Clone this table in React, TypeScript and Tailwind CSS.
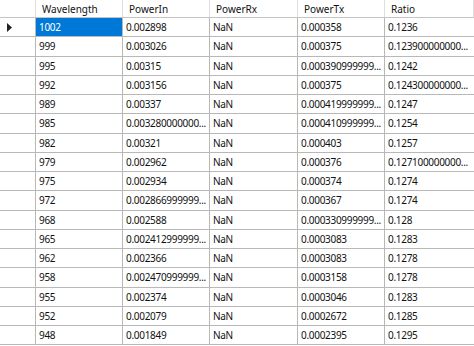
import React from 'react';

// Filas de la grilla (tal como se muestran, ya truncadas)
const filas: string[][] = [
  ['1002', '0.002898', 'NaN', '0.000358', '0.1236'],
  ['999', '0.003026', 'NaN', '0.000375', '0.123900000000...'],
  ['995', '0.00315', 'NaN', '0.000390999999...', '0.1242'],
  ['992', '0.003156', 'NaN', '0.000375', '0.124300000000...'],
  ['989', '0.00337', 'NaN', '0.000419999999...', '0.1247'],
  ['985', '0.003280000000...', 'NaN', '0.000410999999...', '0.1254'],
  ['982', '0.00321', 'NaN', '0.000403', '0.1257'],
  ['979', '0.002962', 'NaN', '0.000376', '0.127100000000...'],
  ['975', '0.002934', 'NaN', '0.000374', '0.1274'],
  ['972', '0.002866999999...', 'NaN', '0.000367', '0.1274'],
  ['968', '0.002588', 'NaN', '0.000330999999...', '0.128'],
  ['965', '0.002412999999...', 'NaN', '0.0003083', '0.1283'],
  ['962', '0.002366', 'NaN', '0.0003083', '0.1278'],
  ['958', '0.002470999999...', 'NaN', '0.0003158', '0.1278'],
  ['955', '0.002374', 'NaN', '0.0003046', '0.1283'],
  ['952', '0.002079', 'NaN', '0.0002672', '0.1285'],
  ['948', '0.001849', 'NaN', '0.0002395', '0.1295'],
];

const columnas = ['Wavelength', 'PowerIn', 'PowerRx', 'PowerTx', 'Ratio'];

const cols = 'grid grid-cols-[36px_87px_87px_88px_87px_1fr]';

const App = () => {
  return (
    <div
      className="w-[474px] h-[346px] overflow-hidden bg-white text-[10px] tracking-[-0.3px] text-[#111]"
      style={{ fontFamily: '"Noto Sans", "Open Sans", sans-serif' }}
    >
      {/* Encabezado */}
      <div className={`${cols} h-[18px] border-b border-[#c4c4c4]`}>
        <div className="border-r border-[#dedede]" />
        {columnas.map((c) => (
          <div key={c} className="flex items-center pl-[6px] border-r border-[#dedede] leading-none tracking-normal">
            {c}
          </div>
        ))}
      </div>

      {/* Filas */}
      {filas.map((fila, i) => (
        <div key={i} className={`${cols} h-[19.25px] border-b border-[#b8b8b8]`}>
          <div className="flex items-center pl-[7px] border-r border-[#b8b8b8]">
            {i === 0 && (
              <svg width="5" height="9" viewBox="0 0 5 9">
                <path d="M0 0 L5 4.5 L0 9 Z" fill="#222" />
              </svg>
            )}
          </div>
          {fila.map((v, j) => (
            <div
              key={j}
              className={
                'flex items-center pl-[3px] whitespace-nowrap overflow-hidden leading-none ' +
                (j < 4 ? 'border-r border-[#b8b8b8] ' : '') +
                (i === 0 && j === 0 ? 'bg-[#0078d7] text-white' : '')
              }
            >
              {v}
            </div>
          ))}
        </div>
      ))}
    </div>
  );
};

export default App;
